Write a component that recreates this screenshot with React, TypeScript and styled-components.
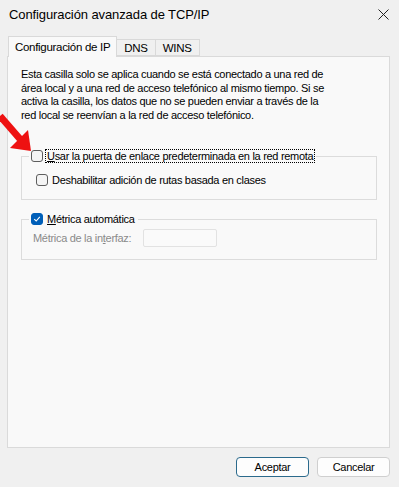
import React from 'react';
import styled, { createGlobalStyle } from 'styled-components';

const GlobalStyle = createGlobalStyle`
    html, body { margin: 0; padding: 0; background: #f0f0f0; }
    body { font-family: 'Liberation Sans', Arial, sans-serif; color: #000; }
    #root { height: 487px; }
`;

const Window = styled.div`
    position: relative;
    height: 487px;
    display: flex;
    flex-direction: column;
    background: #f0f0f0;
    overflow: hidden;
`;

const TitleBar = styled.div`
    height: 28px;
    display: flex;
    align-items: center;
    justify-content: space-between;
    padding: 0 10px 0 9px;
    font-size: 13px;
    letter-spacing: -0.1px;
`;

const CloseBtn = styled.div`
    width: 11px;
    height: 11px;
    display: flex;
`;

const Body = styled.div`
    flex: 1;
    display: flex;
    flex-direction: column;
    padding: 8px 9px 0 7px;
`;

const Tabs = styled.div`
    display: flex;
    align-items: flex-end;
    height: 20px;
    padding-left: 1px;
`;

const Tab = styled.div<{ $active?: boolean }>`
    height: ${(p) => (p.$active ? 21 : 17)}px;
    padding: 0 ${(p) => (p.$active ? 6 : 7)}px;
    display: flex;
    align-items: center;
    font-size: 11.5px;
    letter-spacing: -0.3px;
    background: ${(p) => (p.$active ? '#f9f9f9' : '#f0f0f0')};
    border: 1px solid #d9d9d9;
    border-bottom: ${(p) => (p.$active ? 'none' : '1px solid #d9d9d9')};
    border-left-width: ${(p) => (p.$active ? 1 : 0)}px;
    margin-bottom: ${(p) => (p.$active ? -1 : 0)}px;
    position: relative;
    z-index: ${(p) => (p.$active ? 1 : 0)};
    box-sizing: border-box;
`;

const Panel = styled.div`
    height: 392px;
    box-sizing: border-box;
    background: #f9f9f9;
    border: 1px solid #dadada;
    padding: 11px 12px 0 13px;
`;

const Intro = styled.p`
    margin: 0;
    font-size: 11px;
    letter-spacing: -0.3px;
    line-height: 13.5px;
`;

const Group = styled.fieldset<{ $height: number; $top: number }>`
    margin: ${(p) => p.$top}px 0 0 0;
    padding: 0;
    height: ${(p) => p.$height}px;
    box-sizing: border-box;
    border: 1px solid #dcdcdc;
    min-width: 0;
`;

const Legend = styled.legend`
    margin-left: 7px;
    padding: 0 2px;
    height: 14px;
    display: flex;
    align-items: center;
`;

const CheckRow = styled.label<{ $indent?: number; $top?: number }>`
    display: flex;
    align-items: center;
    gap: 3px;
    font-size: 11px;
    letter-spacing: -0.3px;
    margin: ${(p) => p.$top ?? 0}px 0 0 ${(p) => p.$indent ?? 0}px;
`;

const Caption = styled.span<{ $focused?: boolean }>`
    padding: 0 1px;
    line-height: 12px;
    outline: ${(p) => (p.$focused ? '1px dotted #000' : 'none')};
`;

const Box = styled.span<{ $checked?: boolean }>`
    width: 12px;
    height: 12px;
    box-sizing: border-box;
    border-radius: 3px;
    border: 1px solid ${(p) => (p.$checked ? '#005fb8' : '#5d5d5d')};
    background: ${(p) => (p.$checked ? '#005fb8' : '#f4f4f4')};
    display: flex;
    align-items: center;
    justify-content: center;
`;

const FieldRow = styled.div`
    display: flex;
    align-items: center;
    gap: 12px;
    margin: 3px 0 0 11px;
    font-size: 11px;
    letter-spacing: -0.3px;
    color: #8a8a8a;
`;

const DisabledInput = styled.div`
    width: 74px;
    height: 18px;
    box-sizing: border-box;
    border: 1px solid #e2e2e2;
    border-radius: 2px;
    background: #fafafa;
`;

const Footer = styled.div`
    display: flex;
    justify-content: flex-end;
    gap: 8px;
    padding-top: 9px;
`;

const Button = styled.button<{ $primary?: boolean }>`
    width: 73px;
    height: 20px;
    font-family: inherit;
    font-size: 11px;
    letter-spacing: -0.3px;
    color: #000;
    background: #fdfdfd;
    border: 1px solid ${(p) => (p.$primary ? '#2b6a8c' : '#cfcfcf')};
    border-radius: 4px;
    padding: 0;
`;

const Arrow = styled.svg`
    position: absolute;
    left: 0;
    top: 112px;
`;

function Check({ checked }: { checked?: boolean }) {
    return (
        <Box $checked={checked}>
            {checked && (
                <svg width="8" height="8" viewBox="0 0 8 8">
                    <path d="M1.2 4.2 L3.2 6 L6.8 1.8" fill="none" stroke="#fff" strokeWidth="1.1" />
                </svg>
            )}
        </Box>
    );
}

export default function App() {
    return (
        <Window>
            <GlobalStyle />
            <TitleBar>
                Configuración avanzada de TCP/IP
                <CloseBtn>
                    <svg width="11" height="11" viewBox="0 0 11 11">
                        <path d="M0.5 0.5 L10.5 10.5 M10.5 0.5 L0.5 10.5" stroke="#222" strokeWidth="1" />
                    </svg>
                </CloseBtn>
            </TitleBar>
            <Body>
                <Tabs>
                    <Tab $active>Configuración de IP</Tab>
                    <Tab>DNS</Tab>
                    <Tab>WINS</Tab>
                </Tabs>
                <Panel>
                    <Intro>
                        Esta casilla solo se aplica cuando se está conectado a una red de
                        <br />
                        área local y a una red de acceso telefónico al mismo tiempo. Si se
                        <br />
                        activa la casilla, los datos que no se pueden enviar a través de la
                        <br />
                        red local se reenvían a la red de acceso telefónico.
                    </Intro>
                    <Group $top={27} $height={51}>
                        <Legend>
                            <CheckRow>
                                <Check />
                                <Caption $focused>
                                    <u>U</u>sar la puerta de enlace predeterminada en la red remota
                                </Caption>
                            </CheckRow>
                        </Legend>
                        <CheckRow $indent={14} $top={11}>
                            <Check />
                            <Caption>Deshabilitar adición de rutas basada en clases</Caption>
                        </CheckRow>
                    </Group>
                    <Group $top={12} $height={48}>
                        <Legend>
                            <CheckRow>
                                <Check checked />
                                <Caption>
                                    <u>M</u>étrica automática
                                </Caption>
                            </CheckRow>
                        </Legend>
                        <FieldRow>
                            <span>
                                Métrica de la in<u>t</u>erfaz:
                            </span>
                            <DisabledInput />
                        </FieldRow>
                    </Group>
                </Panel>
                <Footer>
                    <Button $primary>Aceptar</Button>
                    <Button>Cancelar</Button>
                </Footer>
            </Body>
            <Arrow width="36" height="44" viewBox="0 0 36 44">
                <line x1="0" y1="4" x2="20" y2="27" stroke="#ee1111" strokeWidth="7" />
                <polygon points="31,39 10,36 28,18" fill="#ee1111" />
            </Arrow>
        </Window>
    );
}
